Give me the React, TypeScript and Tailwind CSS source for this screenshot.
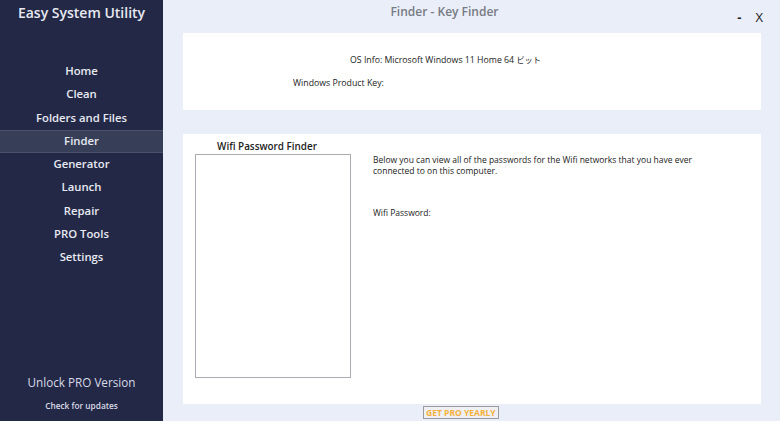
import React from "react";

const navItems = [
  "Home",
  "Clean",
  "Folders and Files",
  "Finder",
  "Generator",
  "Launch",
  "Repair",
  "PRO Tools",
  "Settings",
];

const font = { fontFamily: '"Open Sans", "Noto Sans CJK JP", sans-serif' };

function Sidebar() {
  return (
    <aside className="flex h-full w-[163px] shrink-0 flex-col bg-[#232846] text-[#e8eaf2]">
      <div className="pt-[3px] text-center text-[14px] font-semibold leading-[20px]">
        Easy System Utility
      </div>
      <nav className="mt-[37px] flex flex-col">
        {navItems.map((item) => {
          const active = item === "Finder";
          return (
            <div
              key={item}
              className={
                active
                  ? "flex h-[23.25px] items-center justify-center border-y border-[#4a5168] bg-[#373f58] text-[11.3px] font-semibold"
                  : "flex h-[23.25px] items-center justify-center text-[11.3px] font-semibold"
              }
            >
              {item}
            </div>
          );
        })}
      </nav>
      <div className="mt-auto flex flex-col items-center pb-[9px]">
        <div className="text-[11.7px] leading-[18px] text-[#d8dbe6]">Unlock PRO Version</div>
        <div className="mt-[9px] text-[8.3px] font-semibold leading-[12px] text-[#d8dbe6]">
          Check for updates
        </div>
      </div>
    </aside>
  );
}

function Main() {
  return (
    <main className="flex h-full flex-1 flex-col bg-[#eaeef9]">
      <header className="relative flex h-[33px] shrink-0 items-start">
        <div className="w-full pt-[3px] text-center text-[12px] font-semibold leading-[18px] text-[#777b84]">
          <span className="relative left-[-27px]">Finder - Key Finder</span>
        </div>
        <div className="absolute right-[17px] top-[8px] flex items-center gap-[14px] text-[13px] leading-[18px] text-[#222]">
          <span className="font-bold">-</span>
          <span>X</span>
        </div>
      </header>

      <section className="ml-[20px] mr-[19px] h-[77px] shrink-0 bg-white text-[8.75px] leading-[13px] text-[#222]">
        <div className="pl-[167px] pt-[20px]">
          OS Info: Microsoft Windows 11 Home 64 <span className="text-[8.2px]">ビット</span>
        </div>
        <div className="pl-[110px] pt-[10px]">Windows Product Key:</div>
      </section>

      <section className="ml-[20px] mr-[19px] mt-[24px] flex h-[270px] shrink-0 bg-white">
        <div className="flex w-[168px] shrink-0 flex-col pl-[12px]">
          <div className="pr-[12px] pt-[5px] text-center text-[9.9px] font-semibold leading-[15px] text-[#222]">
            Wifi Password Finder
          </div>
          <div className="h-[224px] w-[156px] border border-[#a9acb3] bg-white" />
        </div>
        <div className="pl-[22px] pt-[20px] text-[8.5px] leading-[11px] text-[#222]">
          <p className="w-[340px]">
            Below you can view all of the passwords for the Wifi networks that you have ever connected to
            on this computer.
          </p>
          <p className="pt-[31px]">Wifi Password:</p>
        </div>
      </section>

      <div className="shrink-0 pl-[260px] pt-0 leading-[13px]">
        <span className="inline-block border border-[#9a9a9a] bg-[#eef0f6] px-[2px] text-[8.5px] font-bold leading-[11px] text-[#f5b03a]">
          GET PRO YEARLY
        </span>
      </div>
    </main>
  );
}

export default function App() {
  return (
    <div className="flex h-[421px] w-[780px] overflow-hidden" style={font}>
      <Sidebar />
      <Main />
    </div>
  );
}
